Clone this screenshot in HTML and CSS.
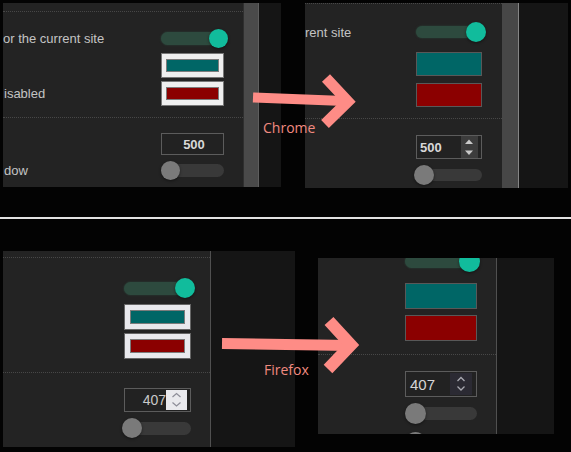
FILE: index.html
```html
<!DOCTYPE html>
<html>
<head>
<meta charset="utf-8">
<title>Chrome vs Firefox controls</title>
<link rel="stylesheet" href="styles.css">
</head>
<body>
<div class="canvas">

  <section class="shot shot-a">
    <div class="pane">
      <div class="sep s-top"></div>
      <div class="row r-toggle"><span class="label l-first">or the current site</span><div class="ctl"><div class="switch on"><span class="knob"></span></div></div></div>
      <div class="row r-teal"><span class="label"></span><div class="ctl"><div class="color legacy"><div class="swatch teal"></div></div></div></div>
      <div class="row r-red"><span class="label l-mid">isabled</span><div class="ctl"><div class="color legacy"><div class="swatch red"></div></div></div></div>
      <div class="sep s-mid"></div>
      <div class="row r-num"><span class="label"></span><div class="ctl"><div class="num"><span class="val">500</span></div></div></div>
      <div class="row r-off"><span class="label l-mid">dow</span><div class="ctl"><div class="switch off"><span class="knob"></span></div></div></div>
    </div>
    <div class="scroll"></div>
    <div class="rest"></div>
  </section>

  <section class="shot shot-b">
    <div class="pane">
      <div class="sep s-top"></div>
      <div class="row r-toggle"><span class="label">rent site</span><div class="ctl"><div class="switch on"><span class="knob"></span></div></div></div>
      <div class="row r-teal"><span class="label"></span><div class="ctl"><div class="color flat teal"></div></div></div>
      <div class="row r-red"><span class="label"></span><div class="ctl"><div class="color flat red"></div></div></div>
      <div class="sep s-mid"></div>
      <div class="row r-num"><span class="label"></span><div class="ctl"><div class="num"><span class="val">500</span><span class="spin"><svg width="17" height="22" viewBox="0 0 17 22"><polygon points="4,8 12,8 8,3.5" fill="#c9c9c9"/><polygon points="4,14.5 12,14.5 8,19" fill="#c9c9c9"/></svg></span></div></div></div>
      <div class="row r-off"><span class="label"></span><div class="ctl"><div class="switch off"><span class="knob"></span></div></div></div>
    </div>
    <div class="scroll"></div>
    <div class="rest"></div>
  </section>

  <div class="divline"></div>

  <section class="shot shot-c">
    <div class="pane">
      <div class="sep s-top"></div>
      <div class="row r-toggle"><span class="label"></span><div class="ctl"><div class="switch on"><span class="knob"></span></div></div></div>
      <div class="row r-teal"><span class="label"></span><div class="ctl"><div class="color legacy"><div class="swatch teal"></div></div></div></div>
      <div class="row r-red"><span class="label"></span><div class="ctl"><div class="color legacy"><div class="swatch red"></div></div></div></div>
      <div class="sep s-mid"></div>
      <div class="row r-num"><span class="label"></span><div class="ctl"><div class="num"><span class="val">407</span><span class="spin"><svg width="21" height="20" viewBox="0 0 21 20"><polyline points="6.5,7 10.5,3.5 14.5,7" fill="none" stroke="#8d8d98" stroke-width="1.2"/><polyline points="6.5,12.5 10.5,16 14.5,12.5" fill="none" stroke="#8d8d98" stroke-width="1.2"/></svg></span></div></div></div>
      <div class="row r-off"><span class="label"></span><div class="ctl"><div class="switch off"><span class="knob"></span></div></div></div>
    </div>
    <div class="divider"></div>
    <div class="rest"></div>
  </section>

  <section class="shot shot-d">
    <div class="pane">
      <div class="row r-toggle"><span class="label"></span><div class="ctl"><div class="switch on"><span class="knob"></span></div></div></div>
      <div class="row r-teal"><span class="label"></span><div class="ctl"><div class="color flat teal"></div></div></div>
      <div class="row r-red"><span class="label"></span><div class="ctl"><div class="color flat red"></div></div></div>
      <div class="sep s-mid"></div>
      <div class="row r-num"><span class="label"></span><div class="ctl"><div class="num"><span class="val">407</span><span class="spin"><svg width="22" height="22" viewBox="0 0 22 22"><polyline points="7.5,8 11,4.5 14.5,8" fill="none" stroke="#a8a8b0" stroke-width="1.3"/><polyline points="7.5,13.5 11,17 14.5,13.5" fill="none" stroke="#a8a8b0" stroke-width="1.3"/></svg></span></div></div></div>
      <div class="row r-off"><span class="label"></span><div class="ctl"><div class="switch off"><span class="knob"></span></div></div></div>
      <div class="row r-off2"><span class="label"></span><div class="ctl"><div class="switch off ghost"><span class="knob"></span></div></div></div>
    </div>
    <div class="divider"></div>
    <div class="rest"></div>
  </section>

  <svg class="arrow arrow-chrome" width="115" height="64" viewBox="248 68 115 64">
    <line x1="253" y1="97.5" x2="344" y2="101" stroke="#fe8c86" stroke-width="10"/>
    <polyline points="326,78 348,101.5 325,124" fill="none" stroke="#fe8c86" stroke-width="11" stroke-linejoin="miter"/>
  </svg>
  <span class="tag tag-chrome">Chrome</span>

  <svg class="arrow arrow-ff" width="148" height="66" viewBox="218 312 148 66">
    <line x1="222" y1="343.5" x2="350" y2="345.5" stroke="#fe8c86" stroke-width="11"/>
    <polyline points="329,321 351,345 328,369" fill="none" stroke="#fe8c86" stroke-width="12" stroke-linejoin="miter"/>
  </svg>
  <span class="tag tag-ff">Firefox</span>

</div>
</body>
</html>
```

FILE: styles.css
```css
* { box-sizing: border-box; margin: 0; padding: 0; }
html, body { width: 571px; height: 452px; overflow: hidden; background: #030303; }
body { font-family: "Liberation Sans", Arial, sans-serif; }

.canvas { position: relative; width: 571px; height: 452px; }

/* screenshot tiles on the collage */
.shot { position: absolute; display: flex; overflow: hidden; background: #151515; }
.shot-a { left: 3px; top: 3px; width: 278px; height: 184px; }
.shot-b { left: 305px; top: 3px; width: 263px; height: 185px; }
.shot-c { left: 3px; top: 251px; width: 292px; height: 196px; }
.shot-d { left: 318px; top: 258px; width: 236px; height: 176px; }

.pane { flex: none; display: flex; flex-direction: column; background: #232323; overflow: hidden; }
.shot-a .pane { width: 240px; }
.shot-b .pane { width: 197px; }
.shot-c .pane { width: 207px; }
.shot-d .pane { width: 178px; }

.scroll { flex: none; }
.shot-a .scroll { width: 16px; background: #4a4a4a; border-left: 1px solid #2f2f2f; border-right: 1px solid #5e5e5e; }
.shot-b .scroll { width: 17px; background: #474747; border-right: 1px solid #858585; }
.divider { flex: none; width: 1px; background: #505050; }
.rest { flex: 1; background: #151515; }

.sep { flex: none; height: 1px; border-top: 1px dotted #474747; }

.row { flex: none; display: flex; align-items: center; }
.shot-a .row { padding-right: 19px; }
.shot-b .row { padding-right: 20px; }
.shot-c .row { padding-right: 19px; }
.shot-d .row { padding-right: 19px; }

.label { flex: 1; min-width: 0; white-space: nowrap; color: #c3c3c3; font-size: 13px; line-height: 15px; }
.l-first { margin-left: 0; }
.l-mid { margin-left: 1px; }

.ctl { flex: none; height: 100%; display: flex; align-items: center; }
.shot-a .ctl { width: 63px; }
.shot-b .ctl { width: 66px; }
.shot-c .ctl { width: 67px; }
.shot-d .ctl { width: 72px; }

/* row rhythm, per screenshot */
.shot-a .s-top { margin-top: 8px; }
.shot-a .r-toggle { margin-top: 15px; height: 22px; }
.shot-a .r-teal { margin-top: 4px; height: 25px; }
.shot-a .r-red { margin-top: 3px; height: 25px; }
.shot-a .s-mid { margin-top: 11px; }
.shot-a .r-num { margin-top: 15px; height: 22px; }
.shot-a .r-off { margin-top: 4px; height: 22px; }

.shot-b .s-top { margin-top: 0; }
.shot-b .r-toggle { margin-top: 17px; height: 22px; }
.shot-b .r-teal { margin-top: 9px; height: 24px; }
.shot-b .r-red { margin-top: 7px; height: 24px; }
.shot-b .s-mid { margin-top: 11px; }
.shot-b .r-num { margin-top: 16px; height: 24px; }
.shot-b .r-off { margin-top: 5px; height: 22px; }

.shot-c .s-top { margin-top: 6px; }
.shot-c .r-toggle { margin-top: 19px; height: 22px; }
.shot-c .r-teal { margin-top: 5px; height: 26px; }
.shot-c .r-red { margin-top: 3px; height: 26px; }
.shot-c .s-mid { margin-top: 13px; }
.shot-c .r-num { margin-top: 15px; height: 24px; }
.shot-c .r-off { margin-top: 5px; height: 22px; }

.shot-d .r-toggle { margin-top: -8px; height: 22px; }
.shot-d .r-teal { margin-top: 11px; height: 26px; }
.shot-d .r-red { margin-top: 6px; height: 26px; }
.shot-d .s-mid { margin-top: 13px; }
.shot-d .r-num { margin-top: 16px; height: 26px; }
.shot-d .r-off { margin-top: 5px; height: 22px; }
.shot-d .r-off2 { margin-top: 7px; height: 22px; }

/* toggle switches */
.switch { width: 100%; height: 13px; border-radius: 7px; display: flex; align-items: center; background: #393939; }
.switch.on { background: #2d4a3e; box-shadow: 0 0 2px #2d4a3e; justify-content: flex-end; }
.shot-b .switch { height: 12px; }
.knob { flex: none; width: 20px; height: 20px; border-radius: 50%; background: #7a7a7a; box-shadow: 0 1px 3px rgba(0, 0, 0, 0.45); }
.switch.on .knob { background: #11bc9c; margin-right: -4px; }
.shot-a .knob { width: 19px; height: 19px; }
.shot-d .knob { width: 21px; height: 21px; }
.shot-d .switch.on .knob { margin-right: -3px; }
.shot-b .switch.off .knob,
.shot-c .switch.off .knob { margin-left: -2px; }
.switch.ghost { background: transparent; }

/* colour inputs */
.color { width: 100%; height: 100%; }
.color.legacy { border: 1px solid #777; background: #efefef; padding: 5px 4px; }
.shot-c .color.legacy { padding: 5px; background: #e9e9ed; border-color: #666; }
.swatch { height: 100%; border: 1px solid #7c7c7c; }
.color.flat { border: 1px solid #585858; }
.teal { background: #006666; }
.red { background: #8b0000; }

/* number inputs */
.num { width: 100%; height: 100%; display: flex; border: 1px solid #5c5c5c; background: #222; color: #d8d8d8; font-size: 13px; }
.val { flex: 1; min-width: 0; display: flex; align-items: center; line-height: 1; }
.spin { flex: none; display: flex; align-items: center; justify-content: center; }

.shot-a .val { justify-content: center; padding-left: 3px; font-weight: bold; }
.shot-b .val { padding-left: 3px; font-weight: bold; }
.shot-b .spin { width: 17px; margin-right: 3px; background: #3c3c3c; }
.shot-c .num { font-size: 14px; color: #c9c9c9; }
.shot-c .val { justify-content: flex-end; }
.shot-c .spin { width: 21px; margin: 1px 3px 1px 0; background: #e9e9ed; }
.shot-d .num { font-size: 15px; color: #d6d6d6; }
.shot-d .val { padding-left: 4px; }
.shot-d .spin { width: 22px; margin: 1px 4px 1px 0; background: #2b2a33; }

/* collage overlays */
.divline { position: absolute; left: 0; top: 217px; width: 571px; height: 2px; background: #e2e2e2; }
.arrow { position: absolute; }
.arrow-chrome { left: 248px; top: 68px; }
.arrow-ff { left: 218px; top: 312px; }
.tag { position: absolute; font-family: "Open Sans", "Noto Sans", sans-serif; font-size: 14px; line-height: 16px; color: #f08a80; white-space: nowrap; }
.tag-chrome { left: 263px; top: 120px; }
.tag-ff { left: 264px; top: 362px; }
```
